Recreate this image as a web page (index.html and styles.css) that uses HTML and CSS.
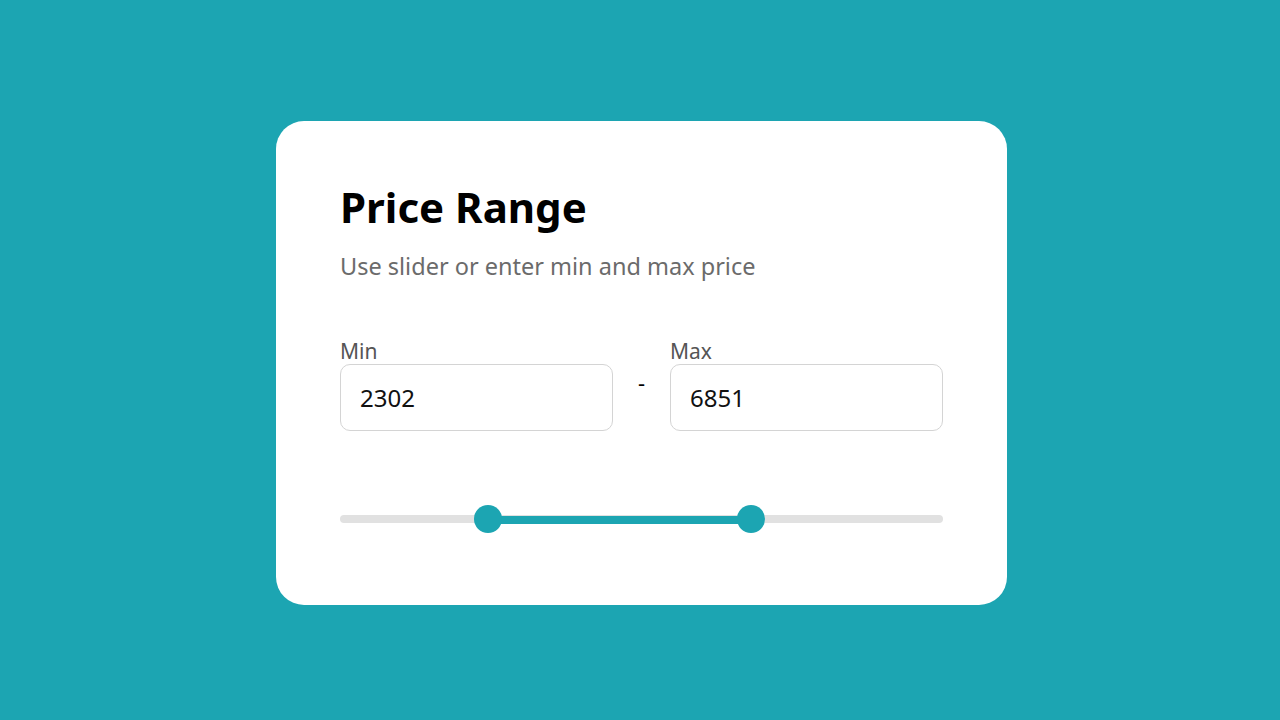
FILE: index.html
```html
<!DOCTYPE html>
<html lang="en">
<head>
<meta charset="utf-8">
<title>Price Range</title>
<link rel="stylesheet" href="styles.css">
</head>
<body>
  <main class="page">
    <section class="card">
      <h1 class="title">Price Range</h1>
      <p class="subtitle">Use slider or enter min and max price</p>

      <div class="fields">
        <label class="field">
          <span class="field-label">Min</span>
          <input class="field-input" type="number" value="2302">
        </label>
        <span class="separator">-</span>
        <label class="field">
          <span class="field-label">Max</span>
          <input class="field-input" type="number" value="6851">
        </label>
      </div>

      <div class="slider">
        <div class="track"></div>
        <div class="fill" style="left: 148px; width: 263px;"></div>
        <div class="thumb" style="left: 148px;"></div>
        <div class="thumb" style="left: 411px;"></div>
      </div>
    </section>
  </main>
</body>
</html>
```
FILE: styles.css
```css
* {
  box-sizing: border-box;
}

html,
body {
  margin: 0;
  height: 100%;
}

body {
  background: #1ca5b2;
  font-family: "Noto Sans", "Open Sans", sans-serif;
  color: #000;
}

.page {
  height: 100%;
  display: flex;
  align-items: center;
  justify-content: center;
}

.card {
  width: 731px;
  height: 484px;
  background: #fff;
  border-radius: 28px;
  padding: 57px 64px 0;
  margin-left: 3px;
  margin-top: 6px;
}

.title {
  margin: 0;
  font-size: 42px;
  font-weight: 700;
  line-height: 58px;
}

.subtitle {
  margin: 14px 0 0;
  font-size: 23.5px;
  line-height: 32px;
  color: #6b6b6b;
}

.fields {
  display: flex;
  align-items: center;
  margin-top: 56px;
}

.field {
  display: flex;
  flex-direction: column;
  width: 273px;
}

.field-label {
  font-size: 21px;
  line-height: 26px;
  color: #555;
}

.field-input {
  width: 100%;
  height: 67px;
  border: 1px solid #d4d4d4;
  border-radius: 10px;
  padding: 0 19px;
  font-family: inherit;
  font-size: 24px;
  color: #111;
  outline: none;
  -moz-appearance: textfield;
}

.field-input::-webkit-outer-spin-button,
.field-input::-webkit-inner-spin-button {
  -webkit-appearance: none;
  margin: 0;
}

.separator {
  flex: 1;
  text-align: center;
  font-size: 22px;
  margin-top: -6px;
}

.slider {
  position: relative;
  height: 28px;
  margin-top: 74px;
}

.track {
  position: absolute;
  left: 0;
  right: 0;
  top: 10px;
  height: 8px;
  border-radius: 4px;
  background: #e1e1e1;
}

.fill {
  position: absolute;
  top: 11px;
  height: 8px;
  background: #1ca5b2;
}

.thumb {
  position: absolute;
  top: 0;
  width: 28px;
  height: 28px;
  margin-left: -14px;
  border-radius: 50%;
  background: #1ca5b2;
}
```
